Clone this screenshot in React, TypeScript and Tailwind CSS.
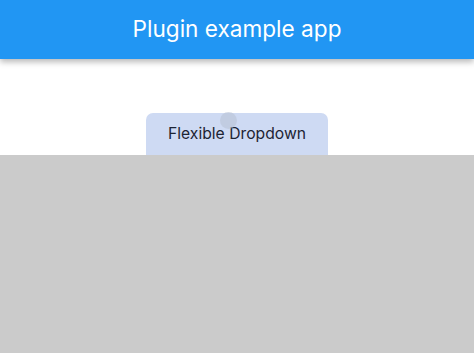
import React from "react";

export default function App() {
  return (
    <div className="relative w-[474px] h-[353px] overflow-hidden bg-white" style={{ fontFamily: "Inter, 'Noto Sans', sans-serif" }}>
      <header className="relative z-10 h-[59px] bg-[#2196f3] flex items-center justify-center shadow-[0_3px_6px_rgba(0,0,0,0.28)]">
        <h1 className="text-white text-[22.6px] leading-none">Plugin example app</h1>
      </header>
      <div className="h-[96px] flex justify-center pt-[54px]">
        <div className="relative w-[182px] h-[42px] rounded-t-[7px] bg-[#cedaf3] flex items-start justify-center pt-[11px]">
          <span className="text-[#1d2433] text-[15.7px] leading-[20px]">Flexible Dropdown</span>
          <div className="absolute left-[74px] top-[-1px] w-[17px] h-[17px] rounded-full bg-[#b9c3d6] opacity-60" />
        </div>
      </div>
      <div className="h-[198px] bg-[#cbcbcb]" />
      <div className="absolute right-[-8px] top-[-8px] w-[16px] h-[16px] rotate-45 bg-[#b5304f] opacity-70" />
    </div>
  );
}
